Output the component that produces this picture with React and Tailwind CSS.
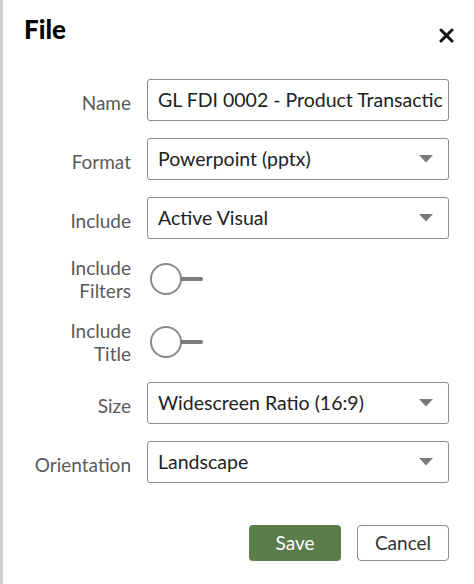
import React from "react";

function Caret() {
  return (
    <svg width="14" height="8" viewBox="0 0 14 8" className="shrink-0">
      <path d="M0 0 L14 0 L7 7.5 Z" fill="#7a7a7a" />
    </svg>
  );
}

function Select({ value }) {
  return (
    <div className="h-[42px] border border-[#8c8c8c] rounded-[3px] bg-white flex items-center pl-[10px] pr-[15px]">
      <span className="flex-1 text-[19.5px] text-[#222] truncate">{value}</span>
      <Caret />
    </div>
  );
}

function Toggle() {
  return (
    <div className="flex items-center">
      <div className="w-[32px] h-[32px] rounded-full border-2 border-[#8a8a8a] bg-white" />
      <div className="w-[22px] h-[4px] rounded-r-full bg-[#7a7a7a] -ml-[1px]" />
    </div>
  );
}

function Label({ children }) {
  return <div className="text-right text-[19px] text-[#5a5a5a] pt-[7px]">{children}</div>;
}

export default function App() {
  return (
    <div
      className="w-[474px] h-[584px] bg-white border-l-[3px] border-[#cfd2d6] flex flex-col pl-[21px] pr-[25px]"
      style={{ fontFamily: "Lato, 'Open Sans', sans-serif" }}
    >
      {/* Header */}
      <div className="flex items-start justify-between pt-[14px]">
        <h1 className="text-[26px] font-black text-black leading-[30px]">File</h1>
        <button className="mt-[14px] mr-[-5px] text-black">
          <svg width="15" height="15" viewBox="0 0 15 15">
            <path d="M2 2 L13 13 M13 2 L2 13" stroke="#111" strokeWidth="3" strokeLinecap="round" />
          </svg>
        </button>
      </div>

      {/* Form */}
      <div className="grid grid-cols-[107px_1fr] gap-x-[16px] gap-y-[17px] mt-[35px] items-center">
        <Label>Name</Label>
        <div className="h-[42px] border border-[#8c8c8c] rounded-[3px] bg-white flex items-center pl-[10px] pr-[4px] overflow-hidden">
          <span className="text-[19.5px] text-[#222] whitespace-nowrap">GL FDI 0002 - Product Transactic</span>
        </div>

        <Label>Format</Label>
        <Select value="Powerpoint (pptx)" />

        <Label>Include</Label>
        <Select value="Active Visual" />

        <div className="text-right text-[19px] text-[#5a5a5a] leading-[23px]">
          Include
          <br />
          Filters
        </div>
        <div className="pl-[3px]">
          <Toggle />
        </div>

        <div className="text-right text-[19px] text-[#5a5a5a] leading-[23px]">
          Include
          <br />
          Title
        </div>
        <div className="pl-[3px]">
          <Toggle />
        </div>

        <Label>Size</Label>
        <Select value="Widescreen Ratio (16:9)" />

        <Label>Orientation</Label>
        <Select value="Landscape" />
      </div>

      {/* Footer */}
      <div className="flex justify-end gap-[16px] mt-[42px]">
        <button className="w-[92px] h-[36px] rounded-[4px] bg-[#5b7d4b] text-white text-[19px]">
          Save
        </button>
        <button className="w-[92px] h-[36px] rounded-[4px] border border-[#8c8c8c] bg-white text-[#333] text-[19px]">
          Cancel
        </button>
      </div>
    </div>
  );
}
